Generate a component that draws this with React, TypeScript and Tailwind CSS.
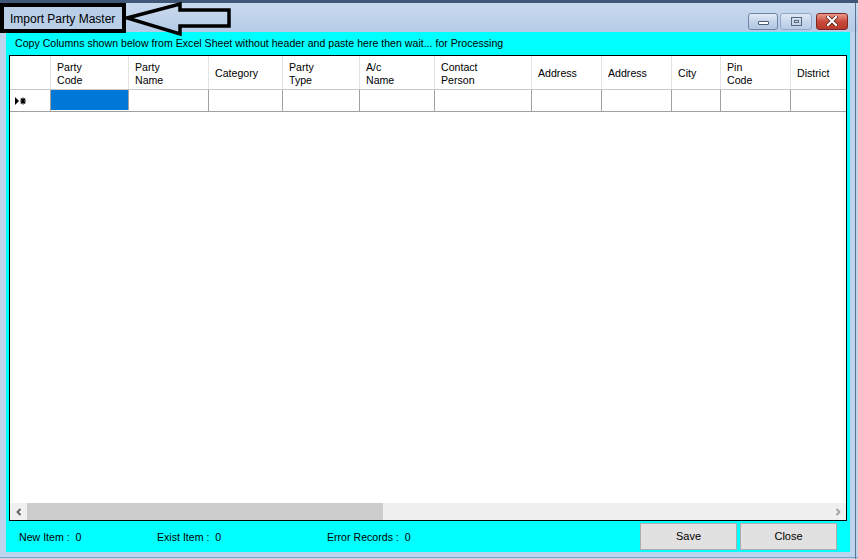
import React from "react"

const columns: { label: string[]; width: number }[] = [
  { label: ["Party", "Code"], width: 78 },
  { label: ["Party", "Name"], width: 80 },
  { label: ["Category"], width: 74 },
  { label: ["Party", "Type"], width: 77 },
  { label: ["A/c", "Name"], width: 75 },
  { label: ["Contact", "Person"], width: 97 },
  { label: ["Address"], width: 70 },
  { label: ["Address"], width: 70 },
  { label: ["City"], width: 49 },
  { label: ["Pin", "Code"], width: 70 },
  { label: ["District"], width: 80 },
]

function CaptionButtons() {
  return (
    <div className="flex items-center gap-[2px] mt-[7px]">
      <div className="w-[30px] h-[17px] rounded-[3px] border border-[#6f84a3] bg-gradient-to-b from-[#e3ecf7] via-[#c3d4ea] to-[#b2c7e3] flex items-center justify-center">
        <div className="w-[11px] h-[4px] border border-[#4a5b74] bg-white rounded-[1px] mt-[3px]" />
      </div>
      <div className="w-[32px] h-[17px] rounded-[3px] border border-[#93a8c6] bg-gradient-to-b from-[#dde8f5] via-[#c8d8ec] to-[#b9cce5] flex items-center justify-center">
        <div className="w-[11px] h-[9px] border border-[#58697f] flex items-center justify-center">
          <div className="w-[5px] h-[3px] border border-[#58697f]" />
        </div>
      </div>
      <div className="ml-[2px] w-[32px] h-[17px] rounded-[3px] border border-[#7a2a20] bg-gradient-to-b from-[#e89a8c] via-[#c9493a] to-[#b83a2c] flex items-center justify-center">
        <svg width="12" height="10" viewBox="0 0 12 10">
          <path d="M2 1 L10 9 M10 1 L2 9" stroke="#4a1a14" strokeWidth="3.6" strokeLinecap="square" />
          <path d="M2 1 L10 9 M10 1 L2 9" stroke="#ffffff" strokeWidth="2.2" strokeLinecap="square" />
        </svg>
      </div>
    </div>
  )
}

export default function App() {
  return (
    <div className="relative w-[858px] h-[559px] overflow-hidden bg-[#bed3ec] font-['Liberation_Sans',Arial,sans-serif] text-[10.6px] text-black">
      {/* title bar */}
      <div className="h-[32px] border-t-[3px] border-[#3f5878] bg-gradient-to-b from-[#c9daee] to-[#b5cbe6] flex justify-end pr-[10px]">
        <CaptionButtons />
      </div>

      {/* annotation round the caption */}
      <div className="absolute left-0 top-[3px] w-[126px] h-[30px] border-4 border-black flex items-center pl-[6px] pt-[2px] text-[12px] bg-[#b9cfe8]">
        Import Party Master
      </div>
      <svg className="absolute left-[122px] top-[1px]" width="112" height="36" viewBox="0 0 112 36">
        <polygon points="5,17 58,3 58,9 107,9 107,25 58,25 58,33" fill="none" stroke="black" strokeWidth="3.5" strokeLinejoin="miter" />
      </svg>

      {/* client area */}
      <div className="ml-[6px] mr-[8px] h-[520px] bg-[#00ffff] flex flex-col">
        <div className="h-[23px] pl-[9px] pt-[5px] leading-[13px]">
          Copy Columns shown below from Excel Sheet without header and paste here then wait... for Processing
        </div>

        <div className="ml-[3px] w-[838px] h-[466px] border border-black bg-white flex flex-col overflow-hidden">
          {/* header */}
          <div className="flex h-[34px] border-b border-[#c8c8c8] shrink-0">
            <div className="w-[41px] shrink-0 border-r border-[#e3e3e3]" />
            {columns.map((c, i) => (
              <div
                key={i}
                className="shrink-0 border-r border-[#e3e3e3] flex flex-col justify-center pl-[6px] pt-[2px] leading-[13px]"
                style={{ width: c.width }}
              >
                {c.label.map((l) => (
                  <span key={l}>{l}</span>
                ))}
              </div>
            ))}
          </div>

          {/* new row */}
          <div className="flex h-[22px] border-b border-[#a0a0a0] shrink-0">
            <div className="w-[41px] shrink-0 border-r border-[#a0a0a0] flex items-center pl-[4px]">
              <svg width="14" height="10" viewBox="0 0 14 10">
                <path d="M1 1 L1 9 L5 5 Z" fill="black" />
                <path d="M9 1.5 L9 8.5 M6 5 L12 5 M6.8 2.5 L11.2 7.5 M11.2 2.5 L6.8 7.5" stroke="black" strokeWidth="1.2" />
              </svg>
            </div>
            {columns.map((c, i) => (
              <div
                key={i}
                className={`shrink-0 border-r border-[#a0a0a0] ${i === 0 ? "bg-[#0078d7] mb-[1px]" : ""}`}
                style={{ width: c.width }}
              />
            ))}
          </div>

          <div className="flex-1" />

          {/* horizontal scrollbar */}
          <div className="h-[17px] bg-[#f0f0f0] flex shrink-0">
            <div className="w-[17px] flex items-center justify-center">
              <svg width="8" height="8" viewBox="0 0 8 8">
                <path d="M5.5 1 L2.5 4 L5.5 7" fill="none" stroke="#606060" strokeWidth="1.8" />
              </svg>
            </div>
            <div className="w-[356px] bg-[#cdcdcd]" />
            <div className="flex-1" />
            <div className="w-[17px] flex items-center justify-center">
              <svg width="8" height="8" viewBox="0 0 8 8">
                <path d="M2.5 1 L5.5 4 L2.5 7" fill="none" stroke="#a0a0a0" strokeWidth="1.8" />
              </svg>
            </div>
          </div>
        </div>

        {/* footer */}
        <div className="flex-1 flex items-start pt-[2px]">
          <div className="flex items-center h-[28px] flex-1 pt-[2px]">
            <span className="w-[151px] pl-[13px]">New Item :&nbsp; 0</span>
            <span className="w-[170px]">Exist Item :&nbsp; 0</span>
            <span>Error Records :&nbsp; 0</span>
          </div>
          <button className="w-[97px] h-[27px] bg-[#e1e1e1] border border-[#adadad] text-[11px] mr-[3px]">Save</button>
          <button className="w-[97px] h-[27px] bg-[#e1e1e1] border border-[#adadad] text-[11px] mr-[13px]">Close</button>
        </div>
      </div>

      {/* bottom & right frame edges */}
      <div className="absolute left-0 bottom-[1px] w-full h-px bg-[#7fa3c9]" />
      <div className="absolute right-[2px] top-[3px] w-px h-full bg-[#5a7494]" />
    </div>
  )
}
